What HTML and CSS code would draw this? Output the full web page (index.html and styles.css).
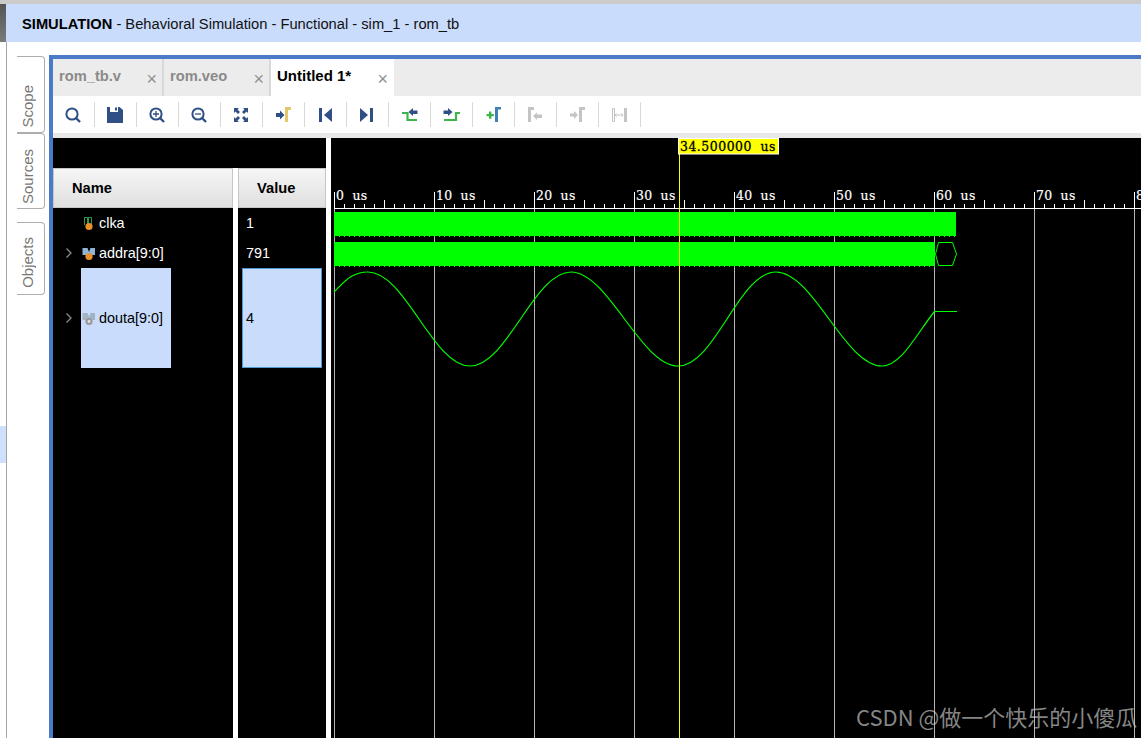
FILE: index.html
```html
<!DOCTYPE html>
<html lang="en">
<head>
<meta charset="utf-8">
<title>rom_tb simulation</title>
<link rel="stylesheet" href="styles.css">
</head>
<body>
<div class="app">
  <div class="topline"></div>
  <header class="title">
    <div class="grip"></div>
    <div class="title-text"><b>SIMULATION</b> - Behavioral Simulation - Functional - sim_1 - rom_tb</div>
  </header>
  <div class="main">
    <div class="rail"><div class="rail-mark"></div></div>
    <nav class="sidetabs">
      <div class="sidetab scope"><span>Scope</span></div>
      <div class="sidetab sources"><span>Sources</span></div>
      <div class="sidetab objects"><span>Objects</span></div>
    </nav>
    <section class="panel">
      <div class="tabs">
        <div class="tab t1"><span class="tab-name">rom_tb.v</span><span class="tab-x">×</span></div>
        <div class="tab t2"><span class="tab-name">rom.veo</span><span class="tab-x">×</span></div>
        <div class="tab t3 active"><span class="tab-name">Untitled 1*</span><span class="tab-x">×</span></div>
      </div>
      <div class="toolbar">
        <div class="tool"><svg viewBox="0 0 18 18"><circle cx="8" cy="8" r="5.6" class="st"/><path d="M12 12l4 4" class="st thick"/></svg></div>
        <div class="tool"><svg viewBox="0 0 18 18"><path class="navy" d="M1 1h3v5h8V1h1.500L17 4v13H1z"/><rect x="9" y="1.500" width="2" height="3" class="navy"/></svg></div>
        <div class="tool"><svg viewBox="0 0 18 18"><circle cx="8" cy="8" r="5.600" class="st"/><path d="M12 12l4 4" class="st thick"/><path d="M5 8h6M8 5v6" class="st thin"/></svg></div>
        <div class="tool"><svg viewBox="0 0 18 18"><circle cx="8" cy="8" r="5.600" class="st"/><path d="M12 12l4 4" class="st thick"/><path d="M5 8h6" class="st thin"/></svg></div>
        <div class="tool"><svg viewBox="0 0 18 18"><path class="navy" d="M2 2h5L5.500 3.500 8 6 6 8 3.500 5.500 2 7zM16 2v5L14.500 5.500 12 8 10 6 12.500 3.500 11 2zM2 16v-5l1.500 1.500L6 10l2 2-2.500 2.500L7 16zM16 16h-5l1.500-1.500L10 12l2-2 2.500 2.500L16 11z"/></svg></div>
        <div class="tool"><svg viewBox="0 0 18 18"><path class="navy" d="M2 7h4V4.500L10.500 9 6 13.500V11H2z"/><path class="yellow" d="M11 1h6v3h-3v12h-3z"/></svg></div>
        <div class="tool"><svg viewBox="0 0 18 18"><rect x="3" y="2" width="3" height="14" class="navy"/><path class="navy" d="M16 2v14L8 9z"/></svg></div>
        <div class="tool"><svg viewBox="0 0 18 18"><rect x="12" y="2" width="3" height="14" class="navy"/><path class="navy" d="M2 2v14l8-7z"/></svg></div>
        <div class="tool"><svg viewBox="0 0 18 18"><path class="gl" d="M2 7h5.500v7H17"/><path class="navy" d="M8.500 6L13 2v2.500h4.500v3.500H13v2z"/></svg></div>
        <div class="tool"><svg viewBox="0 0 18 18"><path class="gl" d="M2 14h12V7h4"/><path class="navy" d="M1.500 4.500H6V2l4.500 4L6 10V8H1.500z"/></svg></div>
        <div class="tool"><svg viewBox="0 0 18 18"><path class="green" d="M5 5.500h2.400v2.400h2.400v2.400H7.400v2.400H5v-2.400H2.500V7.900H5z"/><path class="blue" d="M11 1h6v2.500h-3V16h-3z"/></svg></div>
        <div class="tool"><svg viewBox="0 0 18 18"><path class="grey" d="M2 1h6v3H5v12H2z"/><path class="grey" d="M7 10l4-3.500v2h5v3.500h-5v2z"/></svg></div>
        <div class="tool"><svg viewBox="0 0 18 18"><path class="grey" d="M2 7.500h4V5l4 4-4 4v-2.500H2z"/><path class="grey" d="M11 1h6v3h-3v12h-3z"/></svg></div>
        <div class="tool"><svg viewBox="0 0 18 18"><path class="grey-line" d="M2.500 2.500h2v13h-2z"/><path class="grey-line" d="M5 9h8M6.500 7.500L5 9l1.500 1.500M11.500 7.500L13 9l-1.500 1.500"/><rect x="14" y="2" width="3" height="14" class="grey"/></svg></div>
      </div>
      <div class="divider"></div>
      <div class="viewer">
        <div class="signals">
          <div class="strip"></div>
          <div class="heads">
            <div class="head head-name">Name</div>
            <div class="head head-value">Value</div>
          </div>
          <div class="cols">
            <div class="names">
              <div class="row">
                <div class="chev"></div>
                <div class="cell">
                  <svg class="sig" viewBox="0 0 13 15"><path d="M2.500 9V1.500h3V9M6.500 9V1.500h3V9" fill="none" stroke="#2f9a4a"/><circle cx="7" cy="10.500" r="3.600" fill="#e8902a"/></svg>
                  <span>clka</span>
                </div>
              </div>
              <div class="row">
                <div class="chev"><svg viewBox="0 0 8 12"><path d="M1.500 1.500L6 6l-4.500 4.500" fill="none" stroke="#8c8c8c" stroke-width="1.300"/></svg></div>
                <div class="cell">
                  <svg class="sig" viewBox="0 0 13 15"><path d="M0.500 2h5l1.500 4 1.500-4h4.500v7H9l-2 1-2-1H0.500z" fill="#8fb4d6"/><circle cx="7" cy="10.500" r="3.600" fill="#e8902a"/></svg>
                  <span>addra[9:0]</span>
                </div>
              </div>
              <div class="row row-tall">
                <div class="chev"><svg viewBox="0 0 8 12"><path d="M1.500 1.500L6 6l-4.500 4.500" fill="none" stroke="#8c8c8c" stroke-width="1.300"/></svg></div>
                <div class="cell selected">
                  <svg class="sig" viewBox="0 0 13 15"><path d="M0.500 2h5l1.500 4 1.500-4h4.500v7H9l-2 1-2-1H0.500z" fill="#9fb4c4"/><circle cx="7" cy="10.500" r="3.600" fill="#9a9a9a"/><circle cx="7" cy="10.500" r="1.400" fill="#e4e4e4"/></svg>
                  <span>douta[9:0]</span>
                </div>
              </div>
            </div>
            <div class="values">
              <div class="row"><div class="val">1</div></div>
              <div class="row"><div class="val">791</div></div>
              <div class="row row-tall"><div class="val val-selected">4</div></div>
            </div>
          </div>
        </div>
        <div class="wave">
          <svg class="wave-svg" viewBox="331 138 810 600" preserveAspectRatio="none">
            <defs>
              <pattern id="ruler" x="334" y="192" width="100" height="17" patternUnits="userSpaceOnUse">
                <g fill="#fff">
                  <rect x="0" y="0" width="1" height="17"/>
                  <rect x="10" y="12" width="1" height="5"/><rect x="20" y="12" width="1" height="5"/>
                  <rect x="30" y="12" width="1" height="5"/><rect x="40" y="12" width="1" height="5"/>
                  <rect x="50" y="8" width="1" height="9"/><rect x="60" y="12" width="1" height="5"/>
                  <rect x="70" y="12" width="1" height="5"/><rect x="80" y="12" width="1" height="5"/>
                  <rect x="90" y="12" width="1" height="5"/>
                  <rect x="0" y="16" width="100" height="1"/>
                </g>
              </pattern>
            </defs>
            <rect x="334" y="192" width="807" height="17" fill="url(#ruler)"/>
            <path class="grid" d="M334.500 209V738M434.500 209V738M534.500 209V738M634.500 209V738M734.500 209V738M834.500 209V738M934.500 209V738M1034.500 209V738M1134.500 209V738"/>
            <g class="rt">
              <text x="336" y="200">0 us</text><text x="436" y="200">10 us</text>
              <text x="536" y="200">20 us</text><text x="636" y="200">30 us</text>
              <text x="736" y="200">40 us</text><text x="836" y="200">50 us</text>
              <text x="936" y="200">60 us</text><text x="1036" y="200">70 us</text>
              <text x="1136" y="200">8</text>
            </g>
            <rect x="334" y="212" width="622" height="24" fill="#0f0"/>
            <rect x="334" y="242" width="601" height="24" fill="#0f0"/>
            <path class="fringe" d="M334 236.500H956M334 266.500H935"/>
            <path class="line" d="M935.500 254L938.500 242.500H952.500L956.500 254L952.500 265.500H938.500Z"/>
            <path class="line sine" d="M334 292C345 281 352 272 368 272C405 272 433 366 470 366C507 366 534 272 571 272C608 272 641 366 678 366C715 366 739 272 776 272C813 272 845 366 882 366C902 366 918 331 935 311"/>
            <path class="line" d="M935 311.500H957"/>
            <path class="cursor" d="M679.500 154V738"/>
            <rect x="678.500" y="138.500" width="100" height="15.500" class="flag"/>
            <text x="680" y="151" class="flag-text">34.500000 us</text>
          </svg>
        </div>
      </div>
    </section>
  </div>
  <div class="watermark">CSDN @做一个快乐的小傻瓜</div>
</div>
</body>
</html>
```

FILE: styles.css
```css
* { box-sizing: border-box; }
html, body { margin: 0; padding: 0; }
body { background: #fff; font-family: "Liberation Sans", Arial, sans-serif; overflow: hidden; }
.app { position: relative; width: 1141px; height: 738px; overflow: hidden; display: flex; flex-direction: column; }

.topline { height: 4px; background: #cbcbcb; flex: none; }
.title { height: 38px; flex: none; display: flex; background: #c9dcfb; }
.grip { width: 6px; background: linear-gradient(#555, #7a7a7a); }
.title-text { padding-left: 16px; font-size: 14.7px; line-height: 40px; color: #111; }
.title-text b { color: #000; }

.main { flex: 1; display: flex; min-height: 0; }
.rail { width: 7px; flex: none; border-right: 1px solid #a5a5a5; padding-top: 384px; }
.rail-mark { height: 37px; background: #cfe0fc; }

.sidetabs { width: 42px; flex: none; padding-top: 14px; padding-left: 10px; display: flex; flex-direction: column; }
.sidetab { width: 28px; border: 1px solid #adadad; border-left: 0; border-radius: 0 4px 4px 0; display: flex; align-items: flex-end; justify-content: center; color: #777; font-size: 15px; padding-right: 6px; }
.sidetab span { writing-mode: vertical-rl; transform: rotate(180deg); }
.scope { height: 77px; padding-bottom: 4px; }
.sources { height: 76px; padding-bottom: 4px; }
.objects { height: 73px; margin-top: 13px; padding-bottom: 6px; }

.panel { flex: 1; min-width: 0; margin-top: 13px; border-left: 4px solid #4b7bc8; border-top: 4px solid #4b7bc8; display: flex; flex-direction: column; }

.tabs { height: 37px; flex: none; display: flex; background: #ececec; }
.tab { display: flex; align-items: center; font-size: 14.7px; font-weight: 700; color: #8a8a8a; padding-left: 6px; padding-bottom: 4px; border-right: 2px solid #d8d8d8; }
.t1 { width: 111px; }
.t2 { width: 107px; }
.t3 { width: 123px; border-right: 0; font-size: 15px; }
.tab.active { background: #fff; color: #000; }
.tab-x { margin-left: auto; margin-right: 5px; margin-top: 7px; font-weight: 400; font-size: 18px; color: #8f8f8f; }
.t3 .tab-x { margin-right: 6px; }

.toolbar { height: 37px; flex: none; display: flex; align-items: center; background: #fff; }
.tool { width: 42px; height: 25px; border-right: 1px solid #d9d9d9; padding-right: 2px; display: flex; align-items: center; justify-content: center; }
.tool svg { width: 18px; height: 18px; display: block; }
.st { fill: none; stroke: #2f4f85; stroke-width: 2; }
.st.thick { stroke-width: 2.4; }
.st.thin { stroke-width: 1.3; }
.navy { fill: #2f4f85; }
.yellow { fill: #e3c768; }
.green { fill: #3cb54a; }
.blue { fill: #3f80b5; }
.grey { fill: #c4c4c4; }
.grey-line { fill: none; stroke: #c4c4c4; stroke-width: 1; }
.gl { fill: none; stroke: #3cb54a; stroke-width: 2.2; }

.divider { height: 5px; flex: none; background: #e8e8e8; }

.viewer { flex: 1; min-height: 0; display: flex; background: #fff; }
.signals { width: 273px; flex: none; display: flex; flex-direction: column; }
.strip { height: 30px; background: #000; flex: none; }
.heads { height: 40px; flex: none; display: flex; gap: 5px; }
.head { height: 40px; border: 1px solid #c6c6c6; background: linear-gradient(#f6f6f6, #dfdfdf); font-size: 14.7px; font-weight: 700; color: #000; display: flex; align-items: center; }
.head-name { width: 180px; padding-left: 18px; }
.head-value { width: 88px; padding-left: 18px; }

.cols { flex: 1; display: flex; gap: 5px; min-height: 0; }
.names { width: 180px; background: #000; }
.values { width: 88px; background: #000; }
.row { height: 30px; display: flex; align-items: stretch; color: #fff; font-size: 14.4px; }
.row-tall { height: 100px; }
.chev { width: 28px; display: flex; align-items: center; justify-content: flex-end; padding-right: 8px; }
.chev svg { width: 8px; height: 12px; display: block; }
.cell { width: 90px; display: flex; align-items: center; gap: 4px; padding-left: 1px; white-space: nowrap; }
.sig { width: 13px; height: 15px; display: block; flex: none; }
.selected { background: #c9dcfb; color: #000; }
.val { flex: 1; padding-left: 8px; display: flex; align-items: center; }
.val-selected { margin: 0 4px; padding-left: 3px; flex: none; width: 80px; background: #c9dcfb; border: 1px solid #4f9ad4; color: #000; }

.wave { flex: 1; min-width: 0; background: #000; margin-left: 5px; overflow: hidden; }
.wave-svg { display: block; width: 810px; height: 600px; }
.wave-svg text { font-family: "DejaVu Serif", serif; font-size: 12.4px; letter-spacing: 0.3px; word-spacing: 4px; }
.rt { fill: #fff; stroke: #fff; stroke-width: 0.2px; }
.grid { stroke: #b4b4b4; stroke-width: 1; fill: none; }
.line { stroke: #0f0; stroke-width: 1; fill: none; }
.sine { stroke-width: 1.2; }
.fringe { stroke: #0f0; stroke-width: 1; stroke-dasharray: 1 4; fill: none; }
.cursor { stroke: #ff0; stroke-width: 1; fill: none; }
.flag { fill: #ff0; stroke: #fff; stroke-width: 1; }
.wave-svg .flag-text { fill: #000; stroke: #000; stroke-width: 0.3px; letter-spacing: 0.55px; }

.watermark { position: absolute; left: 856px; top: 701px; font-family: "Noto Sans CJK SC", sans-serif; font-size: 22px; line-height: 30px; color: rgba(205, 205, 205, 0.66); white-space: nowrap; }
```
